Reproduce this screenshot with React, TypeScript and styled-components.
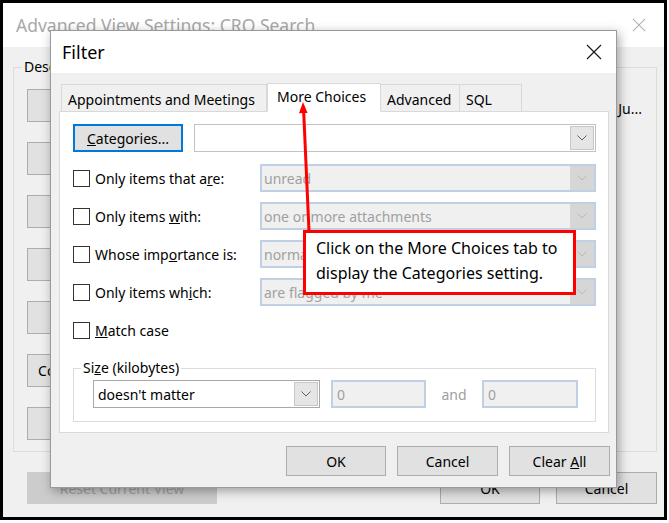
import { FC, ReactNode } from "react";
import styled, { createGlobalStyle, css } from "styled-components";

const GlobalStyle = createGlobalStyle`
  body {
    margin: 0;
    background: #fff;
    font-family: "Noto Sans", "Open Sans", sans-serif;
  }

  * {
    box-sizing: border-box;
  }
`;

const Chevron: FC<{ color?: string }> = ({ color = "#606060" }) => (
  <svg width="10" height="6" viewBox="0 0 10 6">
    <path d="M0.5 0.5 L5 5 L9.5 0.5" fill="none" stroke={color} strokeWidth="1" />
  </svg>
);

const CloseIcon: FC<{ color: string; size: number }> = ({ color, size }) => (
  <svg width={size} height={size} viewBox="0 0 16 16">
    <path d="M1 1 L15 15 M15 1 L1 15" stroke={color} strokeWidth="1.2" />
  </svg>
);

const Combo: FC<{ value: string; disabled?: boolean }> = ({ value, disabled }) => (
  <ComboBox disabled={disabled}>
    <ComboValue disabled={disabled}>{value}</ComboValue>
    <ComboArrow disabled={disabled}>
      <Chevron color={disabled ? "#b8b8b8" : "#606060"} />
    </ComboArrow>
  </ComboBox>
);

interface CheckRowProps {
  label: ReactNode;
  value?: string;
}

const CheckRow: FC<CheckRowProps> = ({ label, value }) => (
  <Row>
    <CheckLabel>
      <CheckBox />
      <span>{label}</span>
    </CheckLabel>
    {value !== undefined && <Combo value={value} disabled />}
  </Row>
);

const descButtons = [
  "Columns...",
  "Group By...",
  "Sort...",
  "Filter...",
  "Other Settings...",
  "Conditional Formatting...",
  "Format Columns...",
];

const App: FC = () => {
  return (
    <>
      <GlobalStyle />
      <Frame>
        <Screen>
          <AdvTitleBar>
            <AdvTitle>Advanced View Settings: CRO Search</AdvTitle>
            <CloseIcon color="#b0b0b0" size={14} />
          </AdvTitleBar>

          <AdvBody>
            <GroupBox>
              <Legend>Description</Legend>
              <DescRows>
                {descButtons.map((label, i) => (
                  <DescRow key={label}>
                    <DescButton>{label}</DescButton>
                    <DescText>{i === 0 ? "Ju..." : ""}</DescText>
                  </DescRow>
                ))}
              </DescRows>
            </GroupBox>

            <AdvFooter>
              <AdvButton width={190} disabled>
                Reset Current View
              </AdvButton>
              <Spacer />
              <AdvButton width={100}>OK</AdvButton>
              <AdvButton width={101}>Cancel</AdvButton>
            </AdvFooter>
          </AdvBody>

          <FilterWindow>
            <FilterTitleBar>
              <span>Filter</span>
              <CloseIcon color="#1a1a1a" size={16} />
            </FilterTitleBar>

            <FilterBody>
              <TabStrip>
                <Tab width={206}>Appointments and Meetings</Tab>
                <Tab width={114} active>
                  More Choices
                </Tab>
                <Tab width={79}>Advanced</Tab>
                <Tab width={62}>SQL</Tab>
              </TabStrip>

              <Panel>
                <Row>
                  <FocusButton>
                    <span>
                      <u>C</u>ategories...
                    </span>
                  </FocusButton>
                  <Combo value="" />
                </Row>

                <CheckRows>
                  <CheckRow
                    label={
                      <>
                        Only items that a<u>r</u>e:
                      </>
                    }
                    value="unread"
                  />
                  <CheckRow
                    label={
                      <>
                        Only items <u>w</u>ith:
                      </>
                    }
                    value="one or more attachments"
                  />
                  <CheckRow
                    label={
                      <>
                        Whose imp<u>o</u>rtance is:
                      </>
                    }
                    value="normal"
                  />
                  <CheckRow
                    label={
                      <>
                        Only items wh<u>i</u>ch:
                      </>
                    }
                    value="are flagged by me"
                  />
                  <CheckRow
                    label={
                      <>
                        <u>M</u>atch case
                      </>
                    }
                  />
                </CheckRows>

                <SizeGroup>
                  <SizeLegend>
                    Si<u>z</u>e (kilobytes)
                  </SizeLegend>
                  <SizeRow>
                    <SizeCombo>
                      <ComboValue>doesn't matter</ComboValue>
                      <ComboArrow>
                        <Chevron />
                      </ComboArrow>
                    </SizeCombo>
                    <NumberBox width={95}>0</NumberBox>
                    <AndLabel>and</AndLabel>
                    <NumberBox width={96}>0</NumberBox>
                  </SizeRow>
                </SizeGroup>
              </Panel>

              <DialogButtons>
                <DialogButton width={100}>OK</DialogButton>
                <DialogButton width={101}>Cancel</DialogButton>
                <DialogButton width={101}>
                  <span>
                    Clear <u>A</u>ll
                  </span>
                </DialogButton>
              </DialogButtons>
            </FilterBody>
          </FilterWindow>

          <Arrow viewBox="0 0 661 514">
            <line x1="300.6" y1="107" x2="306" y2="228" stroke="#ff0000" strokeWidth="3" />
            <polygon points="300,99 304.6,110 296,110.3" fill="#ff0000" />
          </Arrow>

          <Callout>
            Click on the More Choices tab to
            <br />
            display the Categories setting.
          </Callout>
        </Screen>
      </Frame>
    </>
  );
};

const Frame = styled.div`
  width: 669px;
  height: 523px;
  background: #fff;
`;

const Screen = styled.div`
  position: relative;
  width: 667px;
  height: 520px;
  border: 3px solid #000;
  background: #f0f0f0;

  display: flex;
  flex-direction: column;
  overflow: hidden;
`;

const AdvTitleBar = styled.div`
  height: 44px;
  padding: 0 18px 0 13px;

  display: flex;
  align-items: center;

  background: #fff;
  color: #a8a8a8;
  font-size: 17.5px;
`;

const AdvTitle = styled.span`
  flex: 1;
`;

const AdvBody = styled.div`
  flex: 1;
  padding: 20px 7px 13px 10px;

  display: flex;
  flex-direction: column;
`;

const GroupBox = styled.div`
  height: 385px;
  padding: 0 14px 0 13px;
  border: 1px solid #dcdcdc;
`;

const Legend = styled.div`
  width: fit-content;
  height: 20px;
  margin: -11px 0 0 -5px;
  padding: 0 2px;

  background: #f0f0f0;
  font-size: 14px;
  line-height: 20px;
`;

const DescRows = styled.div`
  margin-top: 12px;

  display: flex;
  flex-direction: column;
  gap: 20px;
`;

const DescRow = styled.div`
  height: 33px;

  display: flex;
  align-items: center;
`;

const DescButton = styled.div`
  width: 186px;
  height: 33px;

  display: flex;
  align-items: center;
  justify-content: center;

  background: #e1e1e1;
  border: 1px solid #adadad;
  font-size: 14px;
  white-space: nowrap;
`;

const DescText = styled.span`
  flex: 1;
  padding-top: 5px;

  text-align: right;
  font-size: 14px;
`;

const AdvFooter = styled.div`
  margin-top: 20px;
  padding-left: 14px;

  display: flex;
  gap: 16px;
`;

const Spacer = styled.div`
  flex: 1;
`;

const AdvButton = styled.div<{ width: number; disabled?: boolean }>`
  width: ${({ width }) => width}px;
  height: 32px;

  display: flex;
  align-items: center;
  justify-content: center;

  font-size: 14px;

  ${({ disabled }) =>
    disabled
      ? css`
          background: #cccccc;
          border: 1px solid #cccccc;
          color: #a0a0a0;
        `
      : css`
          background: #e1e1e1;
          border: 1px solid #adadad;
          color: #000;
        `}
`;

const FilterWindow = styled.div`
  position: absolute;
  left: 47px;
  top: 27px;
  z-index: 1;
  width: 567px;
  height: 458px;

  display: flex;
  flex-direction: column;

  background: #f0f0f0;
  border: 1px solid #9a9a9a;
  box-shadow: 2px 3px 10px rgba(0, 0, 0, 0.35);
`;

const FilterTitleBar = styled.div`
  height: 42px;
  padding: 0 14px 0 11px;

  display: flex;
  align-items: center;
  justify-content: space-between;

  background: #fff;
  font-size: 18px;
  color: #000;
`;

const FilterBody = styled.div`
  flex: 1;
  padding: 10px 7px 10px 8px;

  display: flex;
  flex-direction: column;
`;

const TabStrip = styled.div`
  height: 29px;
  margin-bottom: -1px;
  padding-left: 2px;

  display: flex;
  align-items: flex-end;

  position: relative;
  z-index: 1;
`;

const Tab = styled.div<{ width: number; active?: boolean }>`
  width: ${({ width }) => width}px;
  padding-left: ${({ active }) => (active ? 9 : 6)}px;

  display: flex;
  align-items: center;

  border: 1px solid #d9d9d9;
  font-size: 14px;
  white-space: nowrap;

  ${({ active }) =>
    active
      ? css`
          height: 29px;
          padding-bottom: 2px;
          background: #fff;
          border-bottom-color: #fff;
        `
      : css`
          height: 27px;
          margin-bottom: 1px;
          padding-top: 2px;
          background: #f0f0f0;
          border-left-width: 0;
          border-bottom: none;
          &:first-child {
            border-left-width: 1px;
          }
        `}
`;

const Panel = styled.div`
  padding: 12px 12px 10px 13px;

  background: #fff;
  border: 1px solid #d9d9d9;
`;

const Row = styled.div`
  height: 28px;

  display: flex;
  align-items: center;
`;

const FocusButton = styled.div`
  width: 110px;
  height: 28px;
  margin-right: 11px;

  display: flex;
  align-items: center;
  justify-content: center;

  background: #e1e1e1;
  border: 2px solid #0078d7;
  font-size: 14px;
`;

const ComboBox = styled.div<{ disabled?: boolean }>`
  flex: 1;
  height: 28px;

  display: flex;
  align-items: stretch;

  ${({ disabled }) =>
    disabled
      ? css`
          background: #f0f0f0;
          border: 2px solid #bfd0e4;
        `
      : css`
          background: #fff;
          border: 1px solid #c2c2c2;
        `}
`;

const ComboValue = styled.span<{ disabled?: boolean }>`
  flex: 1;
  padding-left: ${({ disabled }) => (disabled ? 2 : 4)}px;

  display: flex;
  align-items: center;

  font-size: 14px;
  color: ${({ disabled }) => (disabled ? "#a0a0a0" : "#000")};
  white-space: nowrap;
  overflow: hidden;
`;

const ComboArrow = styled.div<{ disabled?: boolean }>`
  width: 24px;

  display: flex;
  align-items: center;
  justify-content: center;

  ${({ disabled }) =>
    disabled
      ? css`
          background: #d6d6d6;
        `
      : css`
          margin: 1px;
          background: #e5e5e5;
          border: 1px solid #c8c8c8;
        `}
`;

const CheckRows = styled.div`
  margin-top: 12px;

  display: flex;
  flex-direction: column;
  gap: 10px;
`;

const CheckLabel = styled.label`
  width: 187px;

  display: flex;
  align-items: center;
  gap: 5px;

  font-size: 14px;
  color: #000;
  white-space: nowrap;
`;

const CheckBox = styled.span`
  width: 17px;
  height: 17px;
  flex-shrink: 0;

  background: #fff;
  border: 1px solid #333;
`;

const SizeGroup = styled.div`
  margin-top: 24px;
  padding: 0 16px 13px 19px;

  border: 1px solid #dcdcdc;
`;

const SizeLegend = styled.div`
  width: fit-content;
  height: 20px;
  margin: -11px 0 0 -12px;
  padding: 0 2px;

  background: #fff;
  font-size: 14px;
  line-height: 20px;
`;

const SizeRow = styled.div`
  height: 28px;
  margin-top: 2px;

  display: flex;
  align-items: stretch;
`;

const SizeCombo = styled.div`
  width: 227px;
  margin-right: 11px;

  display: flex;
  align-items: stretch;

  background: #fff;
  border: 1px solid #a8a8a8;
`;

const NumberBox = styled.div<{ width: number }>`
  width: ${({ width }) => width}px;
  padding-left: 4px;

  display: flex;
  align-items: center;

  background: #f0f0f0;
  border: 2px solid #bfd0e4;
  color: #a0a0a0;
  font-size: 14px;
`;

const AndLabel = styled.span`
  width: 56px;

  display: flex;
  align-items: center;
  justify-content: center;

  color: #a0a0a0;
  font-size: 14px;
`;

const DialogButtons = styled.div`
  margin-top: 13px;
  margin-right: -1px;

  display: flex;
  justify-content: flex-end;
  gap: 11px;
`;

const DialogButton = styled.div<{ width: number }>`
  width: ${({ width }) => width}px;
  height: 30px;

  display: flex;
  align-items: center;
  justify-content: center;

  background: #e1e1e1;
  border: 1px solid #adadad;
  font-size: 14px;
  white-space: pre;
`;

const Arrow = styled.svg`
  position: absolute;
  left: 0;
  top: 0;
  z-index: 2;
  width: 661px;
  height: 514px;
  pointer-events: none;
`;

const Callout = styled.div`
  position: absolute;
  left: 300px;
  top: 227px;
  z-index: 3;
  width: 273px;
  height: 65px;
  padding: 3px 6px 0 10px;

  background: #fff;
  border: 3px solid #ff0000;
  font-size: 16px;
  line-height: 25px;
  color: #000;
  white-space: nowrap;
`;

export default App;
